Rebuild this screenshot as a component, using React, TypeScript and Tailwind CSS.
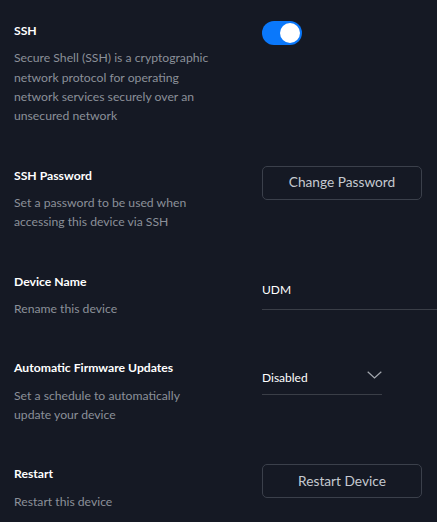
import React from "react";

const font = { fontFamily: "Lato, 'Noto Sans', sans-serif" };

function Row({ title, desc, children }: { title: string; desc: string[]; children: React.ReactNode }) {
  return (
    <div className="flex items-start">
      <div className="w-[248px] shrink-0">
        <div className="text-[12.2px] font-bold leading-[19.33px] text-white">{title}</div>
        <div className="mt-[8px] text-[12.2px] leading-[19.33px] text-[#8b9099]">
          {desc.map((d, i) => (
            <div key={i}>{d}</div>
          ))}
        </div>
      </div>
      <div className="flex-1 min-w-0">{children}</div>
    </div>
  );
}

function OutlineButton({ label }: { label: string }) {
  return (
    <button className="flex h-[34px] w-[160px] items-center justify-center rounded-[5px] border border-[#3b404b] text-[13.7px] text-[#c5c9d0]">
      {label}
    </button>
  );
}

export default function App() {
  return (
    <div style={font} className="min-h-[522px] w-[437px] overflow-hidden bg-[#151924] pl-[14px] pt-[21px]">
      <div className="flex flex-col gap-[40px]">
        <Row
          title="SSH"
          desc={[
            "Secure Shell (SSH) is a cryptographic",
            "network protocol for operating",
            "network services securely over an",
            "unsecured network",
          ]}
        >
          <div className="flex h-[24px] w-[40px] items-center justify-end rounded-full bg-[#0a78fb] pr-[2px]">
            <div className="h-[20px] w-[20px] rounded-full bg-white" />
          </div>
        </Row>
        <Row title="SSH Password" desc={["Set a password to be used when", "accessing this device via SSH"]}>
          <OutlineButton label="Change Password" />
        </Row>
        <Row title="Device Name" desc={["Rename this device"]}>
          <div className="flex h-[38px] items-center border-b border-[#3a3e47] pb-[1px]">
            <span className="text-[12px] text-white">UDM</span>
          </div>
        </Row>
        <Row title="Automatic Firmware Updates" desc={["Set a schedule to automatically", "update your device"]}>
          <div className="relative flex h-[37px] w-[120px] items-center border-b border-[#3a3e47] pt-[3px]">
            <span className="text-[12px] text-white">Disabled</span>
            <svg
              className="absolute right-0 top-[13px]"
              width="15"
              height="8"
              viewBox="0 0 15 8"
              fill="none"
            >
              <path d="M0.7 0.7 L7.5 7 L14.3 0.7" stroke="#a3a7ae" strokeWidth="1.2" />
            </svg>
          </div>
        </Row>
        <Row title="Restart" desc={["Restart this device"]}>
          <OutlineButton label="Restart Device" />
        </Row>
      </div>
    </div>
  );
}
